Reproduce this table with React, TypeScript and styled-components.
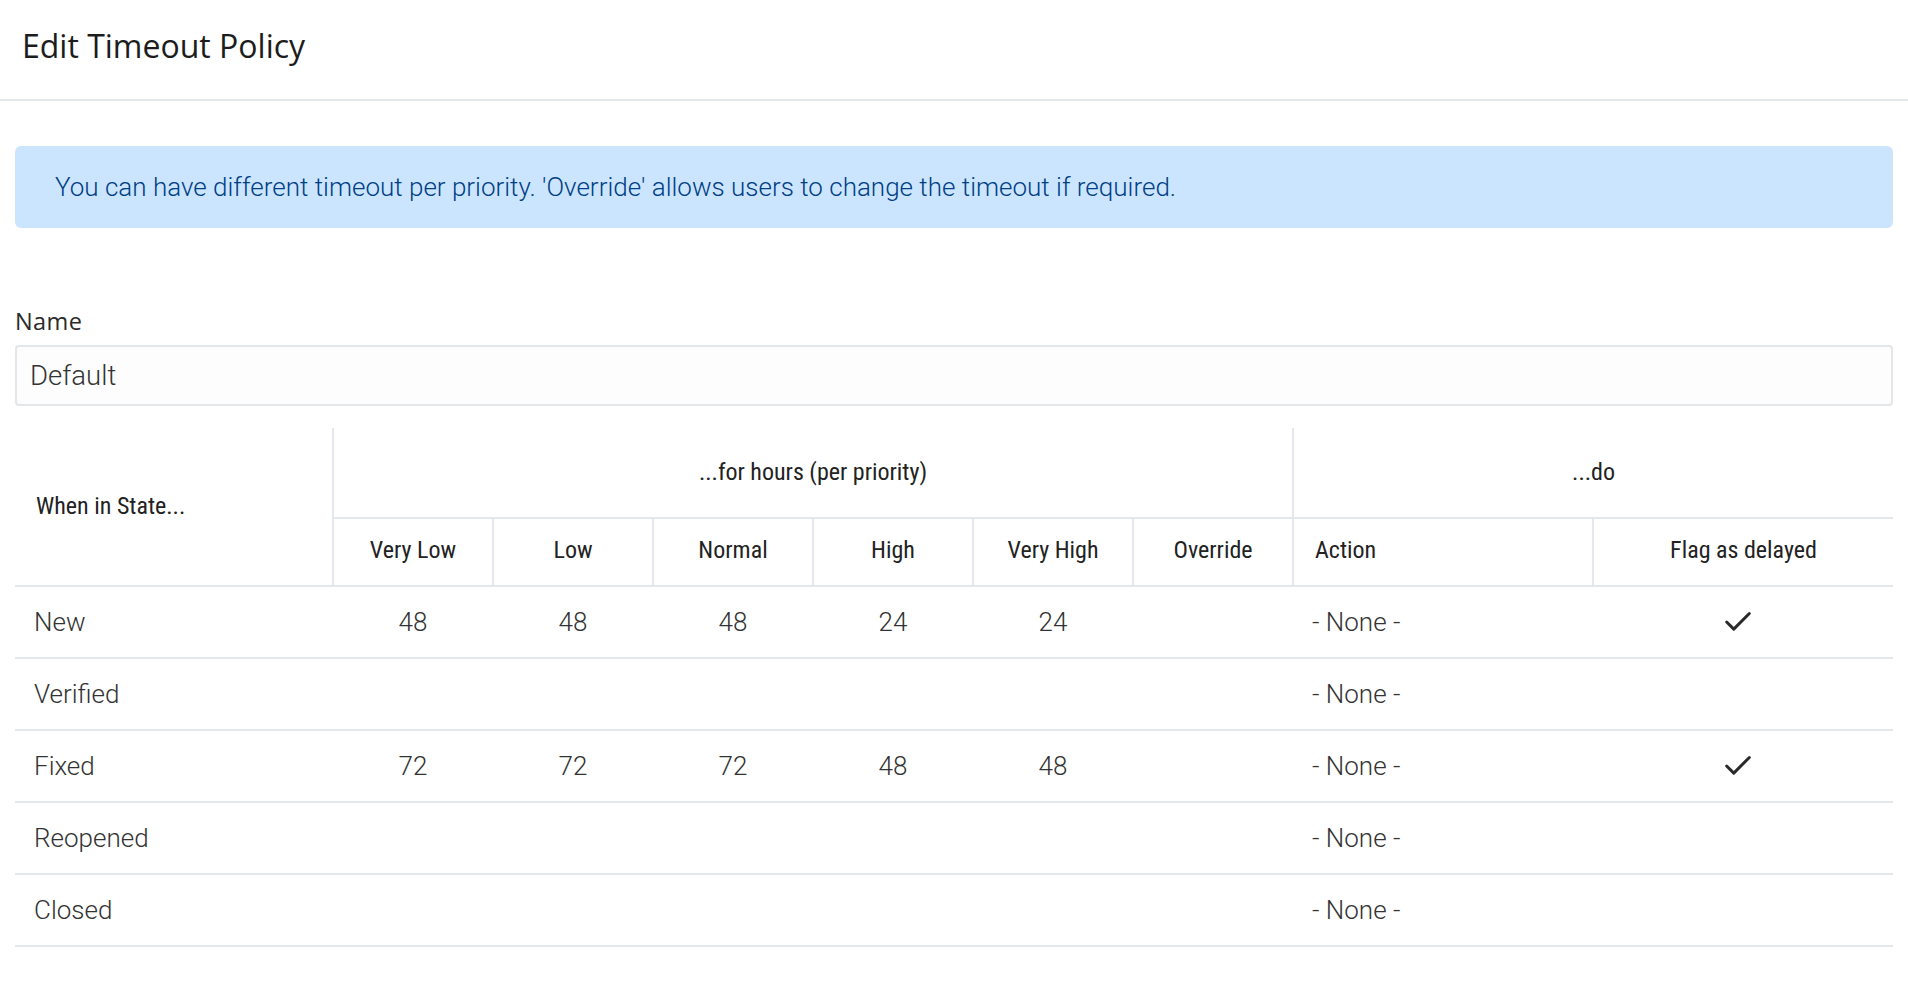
import styled, { createGlobalStyle } from 'styled-components';
import { Check } from 'lucide-react';

const GlobalStyle = createGlobalStyle`
  html, body {
    margin: 0;
    padding: 0;
    background: #ffffff;
  }
  body {
    font-family: Roboto, "Liberation Sans", sans-serif;
    color: #333333;
  }
  * {
    box-sizing: border-box;
  }
`;

const priorities = ['Very Low', 'Low', 'Normal', 'High', 'Very High'];

const rows = [
  { state: 'New', hours: ['48', '48', '48', '24', '24'], flag: true },
  { state: 'Verified', hours: ['', '', '', '', ''], flag: false },
  { state: 'Fixed', hours: ['72', '72', '72', '48', '48'], flag: true },
  { state: 'Reopened', hours: ['', '', '', '', ''], flag: false },
  { state: 'Closed', hours: ['', '', '', '', ''], flag: false }
];

export default function App() {
  return (
    <>
      <GlobalStyle />
      <Header>
        <Title>Edit Timeout Policy</Title>
      </Header>
      <Main>
        <Alert>
          You can have different timeout per priority. 'Override' allows users to change the timeout if required.
        </Alert>
        <Label htmlFor='policy-name'>Name</Label>
        <Input id='policy-name' defaultValue='Default' />
        <PolicyTable>
          <colgroup>
            <col style={{ width: 318 }} />
            {priorities.map((p) => (
              <col key={p} style={{ width: 160 }} />
            ))}
            <col style={{ width: 160 }} />
            <col style={{ width: 300 }} />
            <col style={{ width: 300 }} />
          </colgroup>
          <thead>
            <tr>
              <GroupHead rowSpan={2} $align='left'>
                When in State...
              </GroupHead>
              <GroupHead colSpan={6}>...for hours (per priority)</GroupHead>
              <GroupHead colSpan={2} $last>
                ...do
              </GroupHead>
            </tr>
            <tr>
              {priorities.map((p) => (
                <SubHead key={p}>{p}</SubHead>
              ))}
              <SubHead>Override</SubHead>
              <SubHead $align='left'>Action</SubHead>
              <SubHead $last>Flag as delayed</SubHead>
            </tr>
          </thead>
          <tbody>
            {rows.map((r) => (
              <tr key={r.state}>
                <Cell $align='left'>{r.state}</Cell>
                {r.hours.map((h, i) => (
                  <Cell key={i}>{h}</Cell>
                ))}
                <Cell />
                <Cell $align='left'>- None -</Cell>
                <Cell>{r.flag && <CheckMark size={34} strokeWidth={2.1} />}</Cell>
              </tr>
            ))}
          </tbody>
        </PolicyTable>
      </Main>
    </>
  );
}

const Header = styled.header`
  height: 101px;
  padding: 0 22px;
  display: flex;
  align-items: center;
  border-bottom: 2px solid #e4e8ec;
`;

const Title = styled.h1`
  margin: 0 0 8px;
  font-family: 'Open Sans', 'Noto Sans', sans-serif;
  font-size: 32px;
  font-weight: 400;
  color: #1c1c1c;
`;

const Main = styled.main`
  padding: 45px 15px 40px;
  display: flex;
  flex-direction: column;
`;

const Alert = styled.div`
  height: 82px;
  padding: 0 40px;
  display: flex;
  align-items: center;
  background: #cce5ff;
  border-radius: 6px;
  color: #004085;
  font-family: Roboto, sans-serif;
  font-size: 26px;
  font-weight: 300;
`;

const Label = styled.label`
  margin-top: 77px;
  line-height: 32px;
  font-family: 'Open Sans', 'Noto Sans', sans-serif;
  font-size: 23.5px;
  font-weight: 500;
  letter-spacing: 0.4px;
  color: #2a2a2a;
`;

const Input = styled.input`
  margin-top: 8px;
  height: 61px;
  padding: 0 13px;
  border: 2px solid #e3e7ea;
  border-radius: 4px;
  background: #fdfdfd;
  font-family: Roboto, sans-serif;
  font-size: 27.5px;
  font-weight: 300;
  color: #333333;
  outline: none;
`;

const PolicyTable = styled.table`
  margin-top: 22px;
  width: 100%;
  table-layout: fixed;
  border-collapse: collapse;
`;

const HeadBase = styled.th<{ $align?: 'left' | 'center'; $last?: boolean }>`
  padding: 0 21px;
  text-align: ${(p) => p.$align ?? 'center'};
  font-family: 'Roboto Condensed', 'Liberation Sans Narrow', Roboto, sans-serif;
  font-stretch: condensed;
  font-size: 24px;
  font-weight: 400;
  color: #222222;
  border-right: ${(p) => (p.$last ? 'none' : '2px solid #e4e8ec')};
  border-bottom: 2px solid #e4e8ec;
  white-space: nowrap;
`;

const GroupHead = styled(HeadBase)`
  height: 90px;
  padding-bottom: 2px;
`;

const SubHead = styled(HeadBase)`
  height: 68px;
  padding-bottom: 4px;
`;

const Cell = styled.td<{ $align?: 'left' | 'center' }>`
  height: 72px;
  padding: 0 19px;
  text-align: ${(p) => p.$align ?? 'center'};
  vertical-align: middle;
  border-bottom: 2px solid #e4e8ec;
  font-family: Roboto, sans-serif;
  font-size: 26px;
  font-weight: 300;
  color: #333333;
`;

const CheckMark = styled(Check)`
  display: block;
  margin: 0 auto;
  color: #2a2a2a;
  position: relative;
  left: -5px;
`;
